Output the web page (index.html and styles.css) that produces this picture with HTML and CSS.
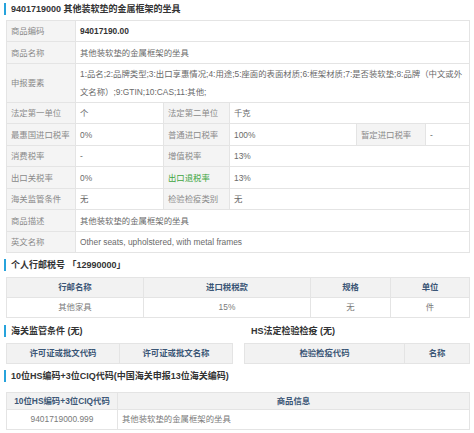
FILE: index.html
```html
<!DOCTYPE html>
<html lang="zh">
<head>
<meta charset="utf-8">
<title>9401719000</title>
<link rel="stylesheet" href="styles.css">
</head>
<body>
<div class="page">
  <div class="title title-first">9401719000 其他装软垫的金属框架的坐具</div>
  <table class="info">
    <colgroup>
      <col class="c1"><col class="c2"><col class="c3"><col class="c4"><col class="c5"><col class="c6">
    </colgroup>
    <tr><td class="lbl">商品编码</td><td class="val strong" colspan="5">94017190.00</td></tr>
    <tr class="plus"><td class="lbl">商品名称</td><td class="val" colspan="5">其他装软垫的金属框架的坐具</td></tr>
    <tr class="tall"><td class="lbl">申报要素</td><td class="val" colspan="5">1:品名;2:品牌类型;3:出口享惠情况;4:用途;5:座面的表面材质;6:框架材质;7:是否装软垫;8:品牌（中文或外文名称）;9:GTIN;10:CAS;11:其他;</td></tr>
    <tr><td class="lbl">法定第一单位</td><td class="val">个</td><td class="lbl">法定第二单位</td><td class="val" colspan="3">千克</td></tr>
    <tr class="plus"><td class="lbl">最惠国进口税率</td><td class="val">0%</td><td class="lbl">普通进口税率</td><td class="val">100%</td><td class="lbl">暂定进口税率</td><td class="val">-</td></tr>
    <tr><td class="lbl">消费税率</td><td class="val">-</td><td class="lbl">增值税率</td><td class="val" colspan="3">13%</td></tr>
    <tr class="plus"><td class="lbl">出口关税率</td><td class="val">0%</td><td class="lbl green">出口退税率</td><td class="val" colspan="3">13%</td></tr>
    <tr><td class="lbl">海关监管条件</td><td class="val">无</td><td class="lbl">检验检疫类别</td><td class="val" colspan="3">无</td></tr>
    <tr class="plus"><td class="lbl">商品描述</td><td class="val" colspan="5">其他装软垫的金属框架的坐具</td></tr>
    <tr><td class="lbl">英文名称</td><td class="val" colspan="5">Other seats, upholstered, with metal frames</td></tr>
  </table>

  <div class="title sec2">个人行邮税号 「12990000」</div>
  <table class="grid grid2">
    <colgroup><col class="g2a"><col class="g2b"><col class="g2c"><col class="g2d"></colgroup>
    <tr class="head"><th>行邮名称</th><th>进口税税款</th><th>规格</th><th>单位</th></tr>
    <tr class="row"><td>其他家具</td><td>15%</td><td>无</td><td>件</td></tr>
  </table>

  <div class="pair">
    <div class="half half-left">
      <div class="title">海关监管条件 (无)</div>
      <table class="grid">
        <colgroup><col class="g3a"><col class="g3b"></colgroup>
        <tr class="head"><th>许可证或批文代码</th><th>许可证或批文名称</th></tr>
      </table>
    </div>
    <div class="half half-right">
      <div class="title plain">HS法定检验检疫 (无)</div>
      <table class="grid">
        <colgroup><col class="g4a"><col class="g4b"></colgroup>
        <tr class="head"><th>检验检疫代码</th><th>名称</th></tr>
      </table>
    </div>
  </div>

  <div class="title sec4">10位HS编码+3位CIQ代码(中国海关申报13位海关编码)</div>
  <table class="grid grid4">
    <colgroup><col class="g5a"><col class="g5b"></colgroup>
    <tr class="head short"><th>10位HS编码+3位CIQ代码</th><th>商品信息</th></tr>
    <tr class="row"><td>9401719000.999</td><td class="left">其他装软垫的金属框架的坐具</td></tr>
  </table>
</div>
</body>
</html>
```

FILE: styles.css
```css
html, body {
  margin: 0;
  padding: 0;
  background: #ffffff;
}

body {
  font-family: "Liberation Sans", "Noto Sans CJK SC", sans-serif;
  font-size: 8.4px;
  color: #666666;
}

.page {
  padding: 3px 5px 0 6px;
  width: 463px;
}

.title {
  height: 12px;
  line-height: 12px;
  margin-left: -2px;
  padding-left: 5px;
  border-left: 2px solid #27a3dc;
  font-size: 9px;
  font-weight: bold;
  color: #333333;
  white-space: nowrap;
}

.title.plain {
  border-left-color: transparent;
}

.title-first {
  margin-bottom: 5px;
}

.sec2 {
  margin-top: 6px;
  margin-bottom: 6px;
}

.sec4 {
  margin-top: 6px;
  margin-bottom: 10px;
}

table {
  border-collapse: collapse;
  table-layout: fixed;
  width: 100%;
}

td, th {
  border: 1px solid #e4e4e4;
  padding: 0 4px;
  vertical-align: middle;
  overflow: hidden;
}

.info td {
  height: 20px;
  line-height: 18px;
}

.info .plus td {
  height: 21px;
}

.info .c1 { width: 69px; }
.info .c2 { width: 88px; }
.info .c3 { width: 66px; }
.info .c4 { width: 127px; }
.info .c5 { width: 69px; }
.info .c6 { width: 44px; }

.info .tall td {
  height: 38px;
}

.lbl {
  background: #f4f4f4;
  color: #8a8a8a;
  white-space: nowrap;
}

.lbl.green {
  color: #3ea53e;
}

.val {
  color: #6a6a6a;
}

.val.strong {
  color: #333333;
  font-weight: bold;
}

.grid th {
  background: #f2f2f2;
  color: #3b5676;
  font-weight: bold;
  text-align: center;
  height: 19px;
  line-height: 19px;
  white-space: nowrap;
}

.grid td {
  text-align: center;
  color: #7a7a7a;
  height: 19px;
  line-height: 19px;
}

.grid td.left {
  text-align: left;
}

.grid .short th {
  height: 16px;
  line-height: 16px;
}

.grid2 .g2a { width: 137px; }
.grid2 .g2b { width: 167px; }
.grid2 .g2c { width: 80px; }
.grid2 .g2d { width: 79px; }

.pair {
  display: flex;
  gap: 12px;
  margin-top: 7px;
}

.half-left {
  width: 226px;
}

.half-right {
  width: 225px;
}

.half .title {
  margin-bottom: 6px;
}

.half-right .title {
  margin-left: 0;
}

.g3a { width: 113px; }
.g3b { width: 113px; }
.g4a { width: 160px; }
.g4b { width: 65px; }

.g5a { width: 111px; }
.g5b { width: 352px; }
```
